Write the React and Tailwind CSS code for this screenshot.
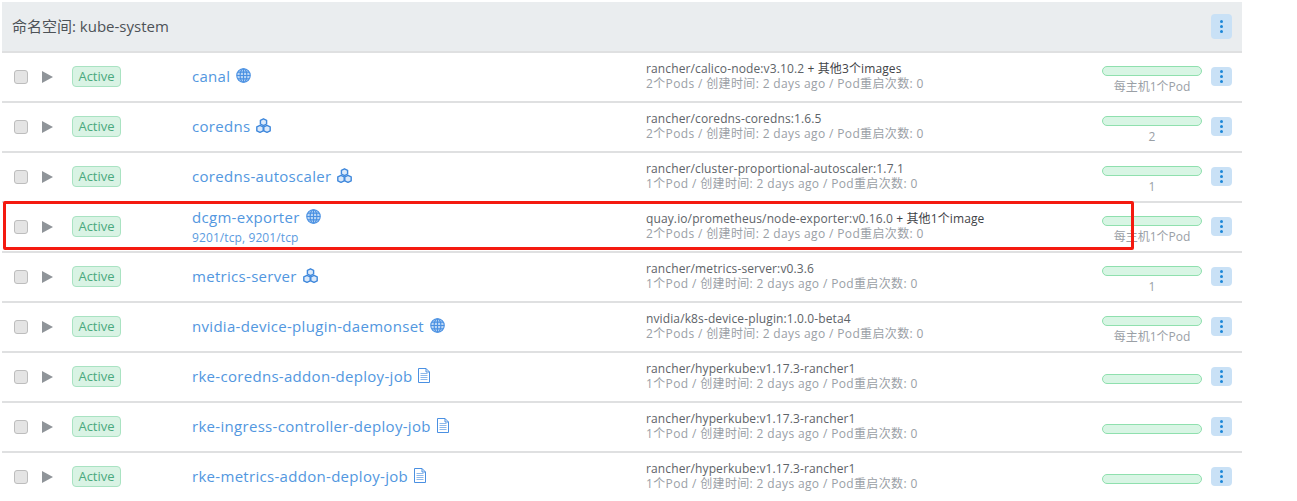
const rows = [
  { name: "canal", icon: "globe", image: "rancher/calico-node:v3.10.2", more: "其他3个images", pods: "2个Pods", scale: "每主机1个Pod" },
  { name: "coredns", icon: "cubes", image: "rancher/coredns-coredns:1.6.5", pods: "2个Pods", scale: "2" },
  { name: "coredns-autoscaler", icon: "cubes", image: "rancher/cluster-proportional-autoscaler:1.7.1", pods: "1个Pod", scale: "1" },
  { name: "dcgm-exporter", icon: "globe", ports: "9201/tcp, 9201/tcp", image: "quay.io/prometheus/node-exporter:v0.16.0", more: "其他1个image", pods: "2个Pods", scale: "每主机1个Pod" },
  { name: "metrics-server", icon: "cubes", image: "rancher/metrics-server:v0.3.6", pods: "1个Pod", scale: "1" },
  { name: "nvidia-device-plugin-daemonset", icon: "globe", image: "nvidia/k8s-device-plugin:1.0.0-beta4", pods: "2个Pods", scale: "每主机1个Pod" },
  { name: "rke-coredns-addon-deploy-job", icon: "file", image: "rancher/hyperkube:v1.17.3-rancher1", pods: "1个Pod" },
  { name: "rke-ingress-controller-deploy-job", icon: "file", image: "rancher/hyperkube:v1.17.3-rancher1", pods: "1个Pod" },
  { name: "rke-metrics-addon-deploy-job", icon: "file", image: "rancher/hyperkube:v1.17.3-rancher1", pods: "1个Pod" },
];

const GlobeIcon = () => (
  <svg width="15" height="15" viewBox="0 0 16 16" fill="#bcd7f5" stroke="#4a90e2" strokeWidth="1.2" className="shrink-0">
    <circle cx="8" cy="8" r="7.200" />
    <ellipse cx="8" cy="8" rx="3.600" ry="7.200" />
    <path d="M8 1v14M1 8h14M2 4.400h12M2 11.600h12" fill="none" />
  </svg>
);

const CubesIcon = () => (
  <svg width="15" height="15" viewBox="0 0 15 15" fill="#dbe9fa" stroke="#3f88dc" strokeWidth="1.400" strokeLinejoin="round" className="shrink-0">
    <path d="M7.500.8l3.100 1.500v3.700l-3.100 1.600-3.100-1.600V2.300z" />
    <path d="M4 7.300l3.200 1.600v3.900L4 14.300.8 12.800V8.900z" />
    <path d="M11 7.300l3.200 1.600v3.900L11 14.300l-3.200-1.500V8.900z" />
  </svg>
);

const FileIcon = () => (
  <svg width="12" height="15" viewBox="0 0 12 15" fill="none" stroke="#4a90e2" strokeWidth="1" className="shrink-0">
    <path d="M.5.5h7.500l3.500 3.500v10.500H.5z" />
    <path d="M8 .5V4h3.500" />
    <path d="M2.500 5.500h7M2.500 7.500h7M2.500 9.500h7M2.500 11.500h7" stroke="#8db8ea" />
  </svg>
);

const icons = { globe: GlobeIcon, cubes: CubesIcon, file: FileIcon };

const MenuButton = ({ tall }) => (
  <button className={`flex w-[21px] flex-col items-center justify-center gap-[2px] rounded-sm bg-[#c9e1f6] ${tall ? "h-[25px]" : "h-[19px]"}`}>
    <span className="h-[3px] w-[3px] rounded-full bg-[#1b87d8]" />
    <span className="h-[3px] w-[3px] rounded-full bg-[#1b87d8]" />
    <span className="h-[3px] w-[3px] rounded-full bg-[#1b87d8]" />
  </button>
);

const Row = ({ row }) => {
  const Icon = icons[row.icon];
  return (
    <div className="flex h-[50px] items-center border-b-2 border-[#dfe0e1] pb-[1px]">
      <div className="ml-3 h-[14px] w-[14px] rounded-[3px] border border-[#bdbdbd] bg-[#e4e4e4]" />
      <div className="ml-[14px] h-0 w-0 border-y-[6px] border-l-[11px] border-y-transparent border-l-[#8f9499]" />
      <div className="ml-[19px] flex h-[21px] w-[49px] items-center justify-center rounded-sm border border-[#a9e3c2] bg-[#d9f3e4] text-[13px] text-[#4aa97e]">
        Active
      </div>
      <div className="mb-[2px] ml-[71px] w-[454px]">
        <div className="flex items-center gap-[6px] text-[15px] leading-5 tracking-[0.3px] text-[#5297e0]">
          {row.name}
          <Icon />
        </div>
        {row.ports && <div className="mt-[3px] text-[12px] leading-[15px] tracking-[0.1px] text-[#5b9be0]">{row.ports}</div>}
      </div>
      <div className="mb-[2px] w-[456px] whitespace-nowrap">
        <div className="text-[12px] leading-[15px] tracking-[0.12px] text-[#5d6368]">
          {row.image}
          {row.more && <span className="text-[#3f4347]"> + {row.more}</span>}
        </div>
        <div className="text-[12px] leading-[15px] tracking-[0.36px] text-[#9aa0a6]">
          {row.pods} / 创建时间: 2 days ago / Pod重启次数: 0
        </div>
      </div>
      {row.scale ? (
        <div className="flex h-[38px] w-[100px] flex-col items-center self-start pt-[13px]">
          <div className="h-[10px] w-full shrink-0 rounded-full border border-[#8fe0ae] bg-[#d8f5e4]" />
          <div className="mt-[2px] text-[12px] leading-[17px] whitespace-nowrap text-[#9aa0a6]">{row.scale}</div>
        </div>
      ) : (
        <div className="mt-[4px] h-[10px] w-[100px] rounded-full border border-[#8fe0ae] bg-[#d8f5e4]" />
      )}
      <div className="ml-[9px]">
        <MenuButton />
      </div>
    </div>
  );
};

export default function App() {
  return (
    <div className="relative h-[501px] w-[1297px] overflow-hidden bg-white pt-[2px] pl-[2px] font-['Open_Sans','Noto_Sans_CJK_SC',sans-serif]">
      <div className="w-[1240px]">
        <div className="flex h-[51px] items-center justify-between border-b-2 border-[#dfe0e1] bg-[#eaedef] pr-[10px] pl-[10px]">
          <span className="text-[15px] text-[#4d5257]">命名空间: kube-system</span>
          <MenuButton tall />
        </div>
        {rows.map((row) => (
          <Row key={row.name} row={row} />
        ))}
      </div>
      <div className="absolute top-[201px] left-[3px] h-[49px] w-[1131px] rounded-[2px] border-[3px] border-[#f41a10]" />
    </div>
  );
}
